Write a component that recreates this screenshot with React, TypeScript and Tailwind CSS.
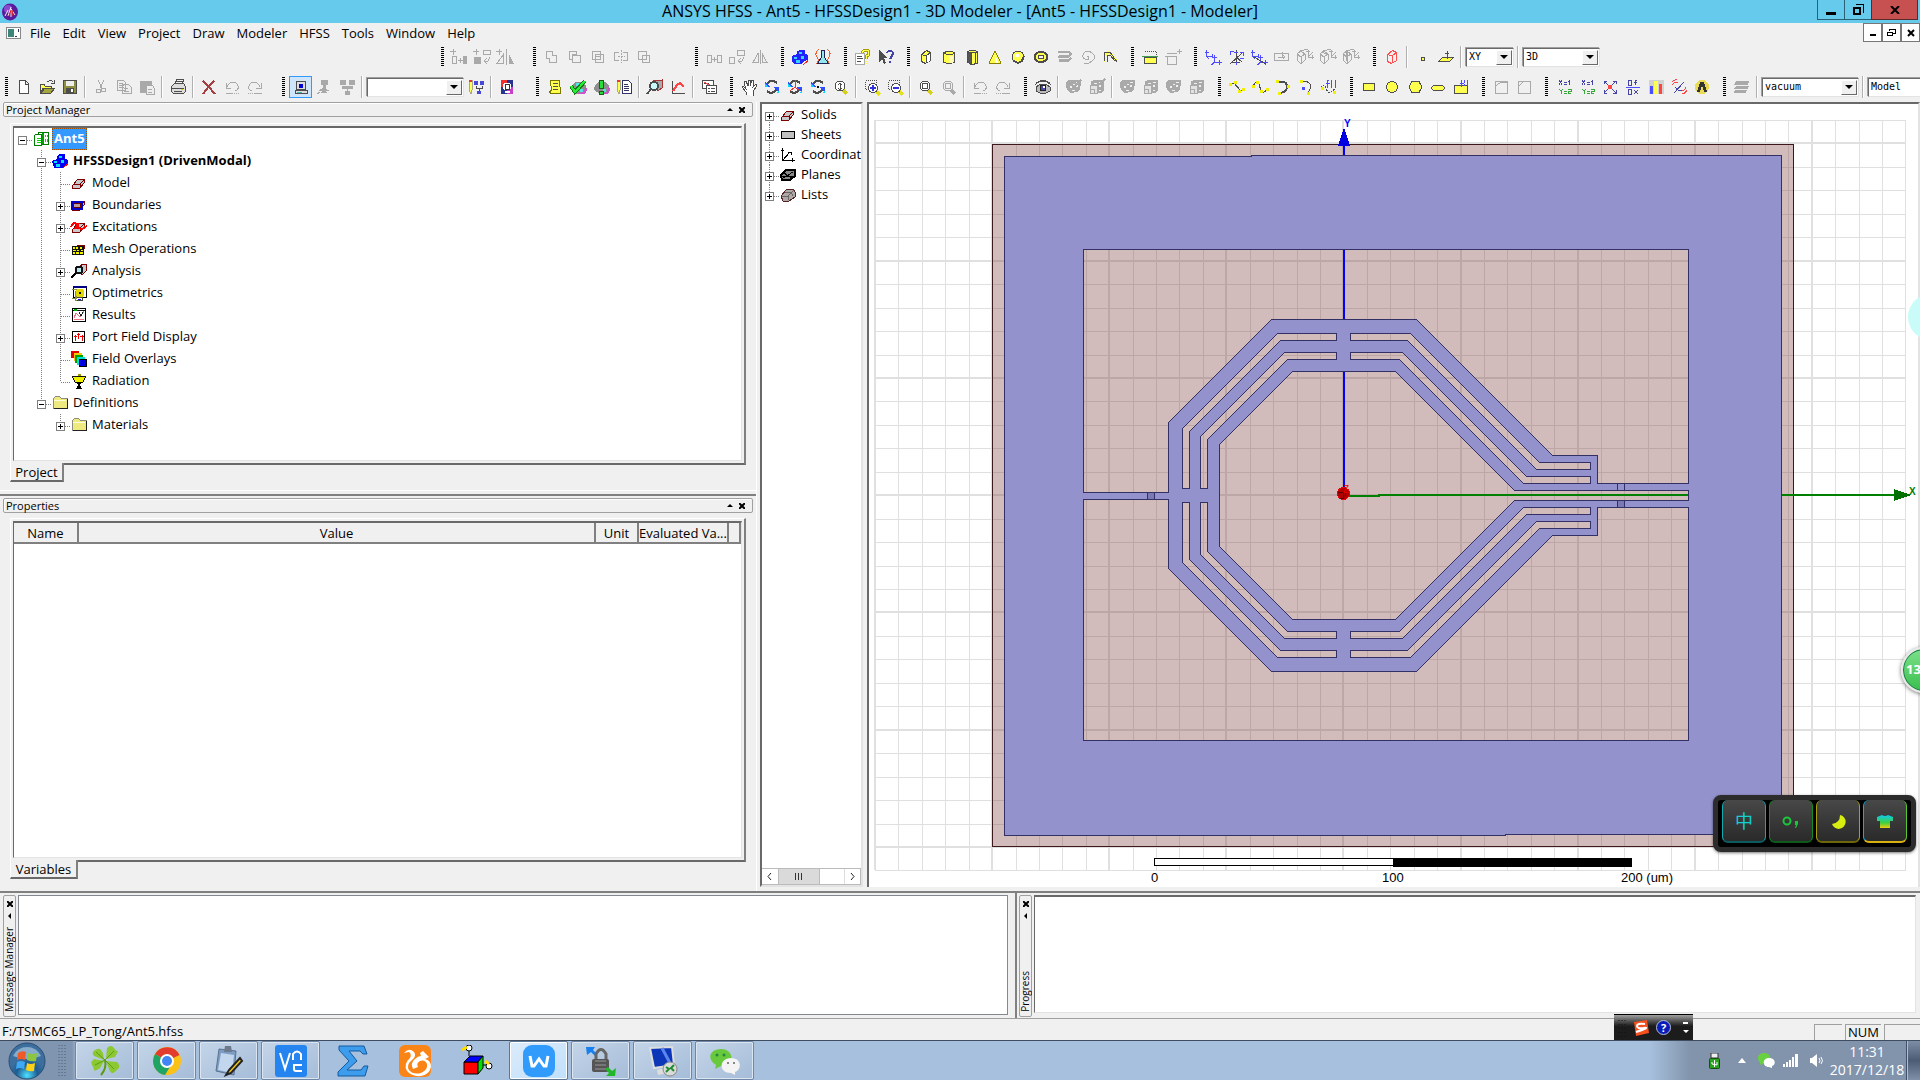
import React from 'react';
import type { ReactNode } from 'react';

const G = '#a9a9a9';
const D = '#4d4d4d';
const Y = '#ffff4d';
const B = '#4d4dff';

type Box = [number, number, number, number];

function Rects({ c, r }: { c: string; r: Box[] }) {
  return (
    <>
      {r.map(([x, y, w, h], i) => (
        <rect key={i} x={x} y={y} width={w} height={h} fill={c} />
      ))}
    </>
  );
}

const plus = <path d="M0 4.500h6M3.500 2v6" stroke={G} />;
const eye = (
  <>
    <path d="M2 5l3-2h12v3l-1 6-3 3-6 1-4-3-1-4z" fill={G} />
    <path d="M6 9h2v2H6zM12 8h2v2h-2zM9 7h2v1H9zM8 13h3v1H8zM12 5h3v1h-3z" fill="#f0f0f0" />
  </>
);
const eyeBox = (
  <>
    <path d="M4 4l3-1h10v10l-3 3-10 1z" fill={G} />
    <path d="M7 6h3v1H7zM12 8h2v2h-2zM12 5h3v1h-3zM12 13h2v1h-2z" fill="#f0f0f0" />
    <path d="M3.500 8.500h7v8h-7zM3.500 12.500h4v4" fill="#e2e2e2" stroke={G} />
  </>
);
const rotate = (
  <>
    <path d="M5 7q3-4 7-3l3 2M15 12q-3 4-7 4l-3-2" stroke={D} strokeWidth="2" />
    <path d="M3 4v6h5zM17 16v-6h-5z" fill="#2a4fff" />
    <path d="M17 13v3h-3zM3 7v3h3z" fill="#0df" />
  </>
);
const lens = (
  <>
    <path d="M12 13l4 4" stroke="#d6cf20" strokeWidth="3" />
    <circle cx="9" cy="9" r="5" fill="#fff" stroke={D} />
  </>
);
const zoomRect = (
  <>
    <path d="M3.500 3.500h11v9h-11z" stroke={D} strokeDasharray="1 1" />
    <path d="M14 14l4 4" stroke="#e6e020" strokeWidth="3" />
    <circle cx="11" cy="11" r="4.500" fill="#fff" stroke={D} />
  </>
);
const chip = (
  <>
    <path d="M8 5h6l4 4-2 7-7 1-6-4 1-5z" fill="#8f8f8f" />
    <path d="M8 6h3v3H8zM12 12h3v3h-3z" fill="#4fe3e3" />
    <path d="M8 17l8-2 2-6 1 4-2 4z" fill="#d24fd2" />
  </>
);
const axes = (
  <>
    <path d="M3.500 3v6h6M3.500 9l2 3" stroke={B} />
    <path d="M11.500 8v7h7M11.500 15l-3 3" stroke={B} />
    <path d="M2 5h4M9 7v4M10 10h4M16 13v5" stroke={B} />
  </>
);
const cubeAxes = (
  <>
    <path d="M2 7l4-3 4 3v6l-4 4-4-4zM2 7l4 3 4-3M6 10v7" stroke={G} />
    <path d="M13 10V3M13 10h6M13 10l5-5M11 4h4M17 8v4M5 4l8-2" stroke={G} />
  </>
);
const curvePts = (r: Box[]) => <Rects c="#f0f000" r={r} />;
const xy = (
  <>
    <path d="M5 3l3 5M8 3l-3 5M10 5h3M10 7h3M15 3v5M14 4h1" stroke="#4545a5" />
    <path d="M5 12l2 2 2-2M7 14v3M10 14h3M10 16h3M14 12.500h3v2h-3v2h3" stroke="#38a838" />
  </>
);

const icons: Record<string, ReactNode> = {
  'Duplicate along line': (<>{plus}<path d="M2.500 9.500h4v7h-4zM8 13.500h5M10 11v5" stroke={G} /><rect x="13" y="9" width="4" height="8" fill={G} /></>),
  'Duplicate around axis': (<>{plus}<rect x="1" y="10" width="7" height="7" fill={G} /><path d="M10.500 3.500h7v4h-7zM17 10l-2 4h-4M14 11l-3 3 3 3" stroke={G} /></>),
  'Duplicate mirror': (<>{plus}<path d="M1 16.500h6V8zM10.500 2v16" stroke={G} /><path d="M13 7v10h5z" fill={G} /></>),
  Unite: <path d="M4.500 4.500h6v4h4v7h-7v-4h-3z" stroke={G} />,
  Subtract: (<><path d="M4.500 4.500h7v3h-4v5h-3z" stroke={G} /><path d="M7.500 8.500h8v7h-8z" stroke={G} /></>),
  Intersect: (<><path d="M4.500 4.500h8v8h-8zM7.500 7.500h8v8h-8zM8 9.500h4v3" stroke={G} /></>),
  Split: (<><path d="M8 5.500H3.500v8H8M12 5.500h4.500v8H12" stroke={G} /><path d="M10.500 3v13M7 9.500h7" stroke={G} strokeDasharray="2 1" /></>),
  Imprint: (<><path d="M4.500 4.500h8v8h-8z" stroke={G} /><path d="M8.500 8.500h7v7h-7z" stroke={G} /></>),
  'Move': <path d="M3.500 8.500h4v7h-4zM13.500 8.500h4v7h-4zM8 12.500h5M10 10v5" stroke={G} />,
  'Rotate object': <path d="M2.500 10.500h5v6h-5zM10.500 3.500h7v5h-7zM17 10l-2 4h-4M14 11l-3 3 3 3" stroke={G} />,
  'Mirror': <path d="M3 15.500h5V6zM17 15.500h-5V6zM10.500 3v14" stroke={G} />,
  'Solve setup': (<><path d="M2 9l5-2V4l3-1h5v4l3 1v5l-4 1-2 3H4l-2-3z" fill="#2222ff" /><path d="M9 5h3v2H9zM4 10h3v2H4zM11 9h3v3h-3zM6 13h4v3H6z" fill="#35d5ff" /><path d="M9 18h3l6-6v3l-5 3z" fill="#f02020" /></>),
  Radiating: (<><path d="M9 3l2 0 1 8 3 5H5l3-5z" fill="#8fe8f0" stroke="#225" /><path d="M6 2Q1 6 4 10t-1 7M14 2q5 4 2 8t1 7" stroke="#f06030" /></>),
  'Topic help': (<><path d="M2.500 6.500h9v11h-9z" fill="#fff" stroke={G} /><path d="M4 9h5M4 11h6M4 14h4" stroke={D} /><path d="M9 6q1-3 4-3t3 3-3 3v3" stroke="#a89c00" strokeWidth="3" /><path d="M9 6q1-3 4-3t3 3-3 3v3M12 14h2v2h-2z" stroke={Y} /></>),
  'Context help': (<><path d="M3 3v12l3-3 2 5 2-1-2-5h4z" fill={D} /><path d="M11 6q1-3 4-2t1 5l-2 3M14 14v2" stroke="#4343a8" strokeWidth="2" /></>),
  Box: (<><path d="M5.500 7.500l5-4 4 2v8l-5 3-4-2z" fill={Y} stroke={D} /><path d="M10 9l4-2v7l-4 2z" fill="#fff" /><path d="M6 7.500l4 1.500v7M10 9l4-3" stroke={D} /></>),
  Cylinder: (<><path d="M4.500 6v9q6 3 11 0V6q-5-4-11 0z" fill={Y} stroke={D} /><path d="M10 9h4v7h-4z" fill="#fff8b8" /><path d="M5 6q5 4 11 0" stroke={D} /></>),
  'Regular polyhedron': (<><path d="M5.500 5l3-2h4l3 2v11l-3 1h-4l-3-2z" fill={Y} stroke={D} /><path d="M6 6h3v10H6z" fill="#555" /><path d="M5 5.500h11M9.500 6v11M13.500 6v10" stroke={D} /></>),
  Cone: (<><path d="M10 4L4 16q6 2 12 0z" fill={Y} stroke="#8a8000" /><path d="M10 6v10h3z" fill="#fff" /></>),
  Sphere: (<><circle cx="10" cy="10" r="6" fill={Y} stroke={D} /><path d="M6 14q7 5 10-5" stroke={D} strokeWidth="2" /><rect x="7" y="7" width="4" height="3" fill="#fff" /></>),
  Torus: (<><ellipse cx="10" cy="10" rx="6.500" ry="5" fill={Y} stroke={D} strokeWidth="2" /><ellipse cx="10" cy="10" rx="3" ry="1.500" fill="#f0f0f0" stroke={D} /></>),
  Helix: <path d="M4 5h11l2 2-2 2H5M5 13h10l2-2M4 10h11M5 14h10" stroke={G} strokeWidth="2" />,
  Spiral: <path d="M10 10q2-2 2 1t-4 1-1-6 8 0 0 8-8 2" stroke={G} />,
  Bondwire: (<><path d="M4 7l3-3 4 1 6 8v3l-5-7-4-2-2 2v8l-2-2z" fill={Y} /><path d="M4 14V5h6l7 10M7 15V8h3l5 6" stroke={D} /></>),
  'Section plane': (<><path d="M4.500 4.500h12v5" stroke={D} strokeDasharray="1 1" /><rect x="4.500" y="10.500" width="12" height="6" fill={Y} stroke={D} /><path d="M2 9.500h16" stroke="#39a050" /></>),
  'New plane': <path d="M3.500 6.500h10M2 9.500h12M4.500 9v8h9V9M14 4.500h5M16.500 2v5" stroke={G} />,
  'Relative CS': axes,
  'Offset CS': (<><path d="M10 3v14M4 17l12-11M10 10l6 5M6 15h8" stroke={D} /><path d="M8 5h4M4 8V4h4M14 5h3v4M10 15v3M14 11h4" stroke={B} /></>),
  'Rotated CS': (<>{axes}<path d="M5 10l12 7" stroke={D} /></>),
  'Face CS': <path d="M2.500 6.500h14v7h-14zM6 10h7M10 5v6M11 8l2 2-2 2" stroke={G} />,
  'Object CS': cubeAxes,
  'Edge CS': (<>{cubeAxes}<path d="M4 5l4 2" stroke={G} /></>),
  'Align CS': (<>{cubeAxes}<path d="M6 5v9" stroke={G} strokeWidth="2" /></>),
  'Wireframe box': <path d="M5.500 7.500l5-4 4 2v8l-5 3-4-2zM6 7.500l4 1.500v7M10 9l4-3" stroke="#ff4d4d" />,
  Point: <circle cx="10" cy="12" r="2" fill={Y} stroke={D} />,
  Plane: (<><path d="M3 14l4-4h11l-4 4z" fill={Y} stroke={D} /><path d="M11 12V4M9 6h4" stroke={D} /></>),
  New: <path d="M5.500 3.500h6l3 3v10h-9zM11 4v3h3" fill="#fff" stroke={D} />,
  Open: (<><path d="M3 7h4l1 2h6v2H6l-3 6z" fill={Y} stroke={D} /><path d="M3.500 16.500l4-5h10l-4 5z" fill="#a5a540" stroke={D} /><path d="M10 5q4-3 6 0M17 3v3h-3" stroke={D} /></>),
  Save: (<><path d="M3.500 3.500h13v13h-13z" fill="#8f8f40" stroke={D} /><path d="M6 4h8v5H6z" fill="#eee" /><path d="M6 11h8v5H6z" fill={D} /><path d="M11 12h2v3h-2z" fill="#fff" /></>),
  Cut: (<><path d="M7 3l4 8M13 3l-4 8" stroke={G} /><circle cx="7.500" cy="14" r="2" stroke={G} /><circle cx="12.500" cy="13" r="2" stroke={G} /></>),
  Copy: <path d="M3.500 3.500h6l2 2v8h-8zM5 6h4M5 8h5M5 10h5M8.500 7.500h6l3 3v6h-9zM10 11h4M10 14h5" fill="#eee" stroke={G} />,
  Paste: (<><path d="M3 4h12v12H3z" fill={G} /><path d="M9.500 8.500h6l2 3v6h-8zM11 12h4M11 15h4" fill="#eee" stroke={G} /></>),
  Print: (<><path d="M3.500 9.500l3-3h9l2 3v5l-2 2h-10l-2-2z" fill="#ddd" stroke={D} /><path d="M7 7l2-5h7l-2 5M9 4h5M4 11h12M6 14h8M5 16h10" stroke={D} /><rect x="13" y="12" width="2" height="1" fill="#d7d700" /></>),
  Delete: <path d="M4 4l5 5 7 8M15 4l-5 5-6 8" stroke="#a54040" strokeWidth="2" />,
  Undo: <path d="M4 6v5h5M5 10q2-5 6-5t5 4-3 5M4 16.500h7M12 16.500h1M14 16.500h1M16 16.500h1" stroke={G} />,
  Redo: <path d="M16 6v5h-5M15 10q-2-5-6-5t-5 4 3 5M3 16.500h1M5 16.500h1M7 16.500h1M9 16.500h8" stroke={G} />,
  'Local machine': (<><path d="M5.500 4.500h9v8h-9zM4 13.500h12v3H4z" fill="#ddd" stroke={D} /><rect x="8" y="7" width="4" height="4" fill="#0000d8" /><path d="M6 15h5" stroke="#4bb" /></>),
  'Remote machine': <path d="M7 3h6v4H7zM9 8h2v3H9zM5 14l5-3 5 3M7 16l3-2 3 2M3 17l3-2" fill={G} stroke={G} />,
  'Distributed machines': <path d="M3 3h5v4H3zM12 3h5v4h-5zM5 9v2h10V9M10 11v3M8 14h4v3H8z" fill={G} stroke={G} strokeWidth="1" />,
  'Edit distributed machines': (<><path d="M3 3h3v10l-1 4-2-4z" fill={Y} stroke="#aa8" /><path d="M3 3h3v2H3z" fill="#e33" /><path d="M8 4h4v4H8zM14 4h4v4h-4zM11 14h4v3h-4z" fill="#4747d8" /><path d="M10 9v2h6V9M13 11v3" stroke={D} /></>),
  Queue: (<><rect x="4" y="3" width="12" height="14" fill="#29348f" /><path d="M4 3h6v7H4z" fill="#f03030" /><path d="M10 10h6v7h-6z" fill="#c83ec8" /><circle cx="10" cy="9.500" r="4" fill="#fff" /><path d="M8 7h4v5H8z" stroke="#333" /><path d="M8 14h5v2H8z" fill="#fff" /></>),
  'Solution data': (<><path d="M5.500 3.500h9l1 13h-10l-1-2 2-1z" fill={Y} stroke="#777700" /><path d="M8 6h5M8 9h5M8 12h5" stroke={D} /></>),
  Validate: (<>{chip}<path d="M3 9l4 6 10-11" stroke="#117711" strokeWidth="4" /><path d="M3 9l4 6 10-11" stroke="#25f035" strokeWidth="2" /></>),
  'Analyze all': (<>{chip}<path d="M8 3h4v8H8zM8 14h4v3H8z" fill="#28dd38" stroke="#175d17" /></>),
  Notes: (<><path d="M3 3h3v10l-1 4-2-4z" fill={Y} stroke="#aa8" /><path d="M3 3h3v2H3z" fill="#e33" /><path d="M8.500 3.500h6l3 3v10h-9zM10 7h4M10 9h5M10 11h5M10 13h5" fill="#fff" stroke="#333366" /></>),
  'Solution lens': (<><path d="M8 4l9-1v8l-4 3z" fill="#aaa" stroke="#a33" /><circle cx="9" cy="9" r="4" fill="#c8f8f8" stroke={D} strokeWidth="2" /><path d="M6 12l-4 5" stroke={D} strokeWidth="2" /></>),
  'Create report': (<><path d="M4.500 4v12.500H17" stroke={D} /><path d="M5 14l4-6 3-2 4 4" stroke="#f44" strokeWidth="2" /></>),
  'Copy image': (<><path d="M3.500 3.500h11v8h-11zM5 6h4l4 4" fill="#fff" stroke={D} /><path d="M5 5l9 5" stroke="#f44" /><path d="M7.500 8.500h10v8h-10zM9 11h2M12 11h4M9 14h2M12 14h4" fill="#fff" stroke={D} /></>),
  Pan: <path d="M7 18v-3l-4-5 1-1 3 3-2-7 2-1 2 5V3h2v6l2-6 2 1-1 6 3-3 1 1-4 7v4" fill="#fff" stroke={D} />,
  Rotate: rotate,
  'Rotate axis': (<>{rotate}<path d="M10 3v7l5 4M10 10l-5 4" stroke="#e33" /></>),
  'Rotate screen': (<>{rotate}<rect x="9" y="9" width="2" height="2" fill="#111" /></>),
  Zoom: (<>{lens}<path d="M9 6v7M7 8l2-2 2 2M7 11l2 2 2-2" stroke={D} /></>),
  'Zoom in': (<>{zoomRect}<path d="M8 11h6M11 8v6" stroke="#3434dd" strokeWidth="2" /></>),
  'Zoom out': (<>{zoomRect}<path d="M8 11h6" stroke="#3434dd" strokeWidth="2" /></>),
  'Fit all': (<>{lens}<rect x="6.500" y="6.500" width="5" height="5" stroke={D} /></>),
  'Fit selection': (<><path d="M12 13l4 4" stroke={G} strokeWidth="3" /><circle cx="9" cy="9" r="5" stroke={G} /><path d="M6.500 6.500h5v5h-5z" stroke={G} /></>),
  Visibility: (<><path d="M2 8q8-8 16 0M3 6q7-5 14 0" stroke={D} /><path d="M3 10q7-6 14 0v4q-7 5-14 0z" fill="#bbb" stroke={D} /><circle cx="10" cy="11" r="3" fill="#4c4ca8" stroke="#222" /><rect x="10" y="9" width="2" height="2" fill="#fff" /></>),
  'Hide selection': (<>{eye}<path d="M11 9l6-6" stroke={G} strokeWidth="2" /></>),
  'Hide in view': (<>{eyeBox}<path d="M12 8l6-6" stroke={G} strokeWidth="2" /></>),
  'Show selection': eye,
  'Show in view': eyeBox,
  'Show all': eye,
  'Show all in view': eyeBox,
  Line: (<><path d="M3 7l4-1 6 7h4" stroke={D} />{curvePts([[2, 6, 3, 3], [7, 4, 3, 3], [11, 13, 3, 3], [15, 11, 3, 3]])}</>),
  Spline: (<><path d="M3 9q3-6 6-2l2 7q3 3 6-2" stroke={D} />{curvePts([[2, 8, 3, 3], [6, 4, 3, 3], [10, 13, 3, 3], [16, 11, 3, 3]])}</>),
  'Three point arc': (<><path d="M5 5q10-2 9 6-2 5-8 5" stroke={D} strokeWidth="2" />{curvePts([[3, 3, 3, 3], [14, 8, 3, 3], [5, 15, 3, 3]])}</>),
  'Center arc': (<><path d="M6 4q9 0 9 6-1 4-4 6" stroke={D} />{curvePts([[4, 3, 3, 3], [11, 15, 3, 3]])}<rect x="6" y="10" width="3" height="3" fill={B} /></>),
  'Equation curve': (<><path d="M2 11q3-6 5 0t5 4l4-3" stroke={D} strokeDasharray="2 1" /><path d="M10 3h-2v8M7 6h4M13 3q-2 4 0 8M16 3q2 4 0 8" stroke={B} />{curvePts([[2, 10, 3, 3], [14, 14, 3, 3]])}</>),
  Rectangle: <rect x="4.500" y="6.500" width="11" height="7" fill={Y} stroke={D} />,
  Circle: <circle cx="10" cy="10" r="5.500" fill={Y} stroke={D} />,
  Polygon: <path d="M7 4.500h7l3 5.500-3 5.500H7L4 10z" fill={Y} stroke={D} />,
  Ellipse: <ellipse cx="10" cy="11" rx="6.500" ry="3" fill={Y} stroke={D} />,
  'Equation surface': (<><path d="M3.500 8.500h13v8h-13z" fill={Y} stroke={D} /><path d="M11 3h-1v7M9 6h4M14 3q-2 4 0 6M16 3q2 4 0 6" stroke={B} /></>),
  Fillet: <path d="M4.500 4.500h12v12h-12zM5 9q3-4 11-4" stroke={G} />,
  Chamfer: <path d="M4.500 4.500h12v12h-12zM5 9l4-4" stroke={G} />,
  'Design properties': xy,
  'Project variables': xy,
  Optimetrics: (<><path d="M4 4l4 4M16 4l-4 4M4 16l4-4M16 16l-4-4M4 7V4h3M13 4h3v3M4 13v3h3M13 16h3v-3" stroke="#4545a5" /><rect x="8" y="8" width="4" height="4" fill="#f44" /></>),
  Sensitivity: (<><path d="M3 10h14" stroke={B} /><path d="M5 3h3v5H5zM14 3h-2v5M11 5h3M5 12h3v5H5zM11 13l4 4M15 13l-4 4" stroke="#4545a5" /></>),
  Statistics: (<><rect x="3" y="3" width="15" height="14" fill="#d2d2d2" /><Rects c={B} r={[[4, 9, 3, 8]]} /><Rects c={Y} r={[[8, 4, 4, 13]]} /><Rects c="#f44" r={[[13, 7, 3, 10]]} /></>),
  Tuning: (<><path d="M3 5q2-3 5-2M3 8q3-4 6-2M12 14q4 0 5-4M13 17q4-1 5-4" stroke="#f44" /><path d="M5 16L15 5M6 10l3 3 4 1" stroke="#4545a5" /></>),
  'Design of experiments': (<><circle cx="10" cy="10" r="7" fill="#eadb55" /><path d="M5 15l3-10h4l3 10h-3l-2-7-2 7z" fill="#333" /></>),
  'Assign material': <path d="M4 4h13l-1 4H2zM4 9h13l-1 3H2zM3 13h12l-1 3H2z" fill={G} />,
};

function Icon({ name }: { name: string }) {
  return (
    <svg width="20" height="20" viewBox="0 0 20 20" fill="none" shapeRendering="crispEdges" aria-hidden="true">
      {icons[name]}
    </svg>
  );
}

function Combo({ label, value, w }: { label: string; value: string; w: string }) {
  return (
    <span className={`${w} flex h-[19px] shrink-0 items-center border border-[#e3e3e3] border-t-[#696969] border-l-[#696969] bg-white p-px shadow-[-1px_-1px_0_#a0a0a0]`}>
      <select aria-label={label} className="h-full min-w-0 flex-1 appearance-none bg-white pl-px font-['DejaVu_Sans_Mono','Liberation_Mono',monospace] text-[10px] leading-none text-black outline-none">
        <option>{value}</option>
      </select>
      <span className="pointer-events-none flex h-full w-4 items-center justify-center border border-[#696969] border-t-white border-l-white bg-[#f0f0f0]">
        <svg width="8" height="4" aria-hidden="true"><path d="M0 0h8L4 4z" /></svg>
      </span>
    </span>
  );
}

const selects: Record<string, { value: string; w: string }> = {
  '#Active machine': { value: '', w: 'w-[97px]' },
  '#Drawing plane': { value: 'XY', w: 'w-[48px]' },
  '#Movement mode': { value: '3D', w: 'w-[77px]' },
  '#Material': { value: 'vacuum', w: 'w-[97px]' },
  '#Model state': { value: 'Model', w: 'w-[100px]' },
};

type Group = [string, string[]];

const row1: Group[] = [
  ['ml-[436px]', ['Duplicate along line', 'Duplicate around axis', 'Duplicate mirror']],
  ['ml-[11px]', ['Unite', 'Subtract', 'Intersect', 'Split', 'Imprint']],
  ['ml-[35px]', ['Move', 'Rotate object', 'Mirror']],
  ['ml-[5px]', ['Solve setup', 'Radiating']],
  ['ml-[5px]', ['Topic help', 'Context help']],
  ['ml-[5px]', ['Box', 'Cylinder', 'Regular polyhedron', 'Cone', 'Sphere', 'Torus', 'Helix', 'Spiral', 'Bondwire']],
  ['ml-[5px]', ['Section plane', 'New plane']],
  ['ml-[5px]', ['Relative CS', 'Offset CS', 'Rotated CS', 'Face CS', 'Object CS', 'Edge CS', 'Align CS']],
  ['ml-[6px]', ['Wireframe box', '|', 'Point', 'Plane', '|', '#Drawing plane', '|', '#Movement mode']],
];

const row2: Group[] = [
  ['ml-0', ['New', 'Open', 'Save', '|', 'Cut', 'Copy', 'Paste', '|', 'Print', '|', 'Delete', 'Undo', 'Redo']],
  ['ml-[11px]', ['Local machine', 'Remote machine', 'Distributed machines', '|', '#Active machine', 'Edit distributed machines', '|', 'Queue']],
  ['ml-[13px]', ['Solution data', 'Validate', 'Analyze all', 'Notes', '|', 'Solution lens', 'Create report', '|', 'Copy image']],
  ['ml-[5px]', ['Pan', 'Rotate', 'Rotate axis', 'Rotate screen', 'Zoom', '|', 'Zoom in', 'Zoom out', '|', 'Fit all', 'Fit selection', '|', 'Undo', 'Redo']],
  ['ml-[5px]', ['Visibility', '|', 'Hide selection', 'Hide in view', '|', 'Show selection', 'Show in view', 'Show all', 'Show all in view']],
  ['ml-[5px]', ['Line', 'Spline', 'Three point arc', 'Center arc', 'Equation curve']],
  ['ml-[5px]', ['Rectangle', 'Circle', 'Polygon', 'Ellipse', 'Equation surface']],
  ['ml-[5px]', ['Fillet', 'Chamfer']],
  ['ml-[5px]', ['Design properties', 'Project variables', 'Optimetrics', 'Sensitivity', 'Statistics', 'Tuning', 'Design of experiments']],
  ['ml-[5px]', ['Assign material', '|', '#Material', '|', '#Model state']],
];

function ToolRow({ groups, label }: { groups: Group[]; label: string }) {
  return (
    <div role="toolbar" aria-label={label} className="flex h-[30px] shrink-0 items-center overflow-hidden">
      {groups.map(([ml, items], gi) => (
        <div key={gi} className={`${ml} flex h-full shrink-0 items-center`}>
          <span className="flex w-3 justify-center">
            <svg width="3" height="20" aria-hidden="true"><path d="M1.500 0v20" stroke="#000" strokeWidth="3" strokeDasharray="1 1" shapeRendering="crispEdges" /></svg>
          </span>
          {items.map((n, i) => {
            if (n === '|') return <span key={i} className="mx-[3px] h-[22px] w-0.5 shrink-0 border-r border-l border-[#b0b0b0] border-r-white" />;
            if (n[0] === '#') return <span key={i} className="flex pl-px"><Combo label={n.slice(1)} value={selects[n].value} w={selects[n].w} /></span>;
            return (
              <button
                key={i}
                type="button"
                aria-label={n}
                className={`flex h-[22px] w-[23px] shrink-0 items-center justify-center ${n === 'Local machine' ? 'bg-[#cfe6fa] outline -outline-offset-1 outline-[#3399ff]' : ''}`}
              >
                <Icon name={n} />
              </button>
            );
          })}
        </div>
      ))}
    </div>
  );
}

/* ---------- trees ---------- */

const block = (
  <>
    <path d="M1.500 10.500l5-6h7v3l-5 6h-7z" fill="#c8c8c8" stroke="#800000" />
    <path d="M2 9.500h7v3M9 9l5-5" stroke="#800000" />
  </>
);

const treeIcons: Record<string, ReactNode> = {
  Ant5: (<><path d="M5.500 1.500h10v12h-10z" fill="#fff" stroke="#007d00" /><path d="M10 2v11" stroke="#00a000" strokeWidth="2" /><Rects c="#00d800" r={[[12, 4, 1, 2], [14, 4, 1, 2], [12, 8, 1, 3], [14, 8, 1, 3]]} /><path d="M2.500 3.500h6v11h-7v-10z" fill="#fff" stroke="#007d00" /><path d="M4 7h4M4 9h4M4 11h4" stroke="#00d800" /></>),
  HFSSDesign1: (<><path d="M0 8l5-2V3l3-2h5v5l3 1v5l-4 1-2 2H2z" fill="#0000f0" /><path d="M7 3h3v2H7zM2 8h3v2H2zM9 7h3v3H9zM4 11h4v3H4z" fill="#00e0ff" /><path d="M7 15h3l6-6v3l-5 3z" fill="#f00" /></>),
  Model: block,
  Boundaries: (<>{block}<rect x="1" y="5" width="10" height="7" fill="#b9a0a0" stroke="#0000c8" strokeWidth="2" /><rect x="2.500" y="6.500" width="7" height="4" stroke="#600" /></>),
  Excitations: (<>{block}<path d="M0 8q3-7 6-2t5 4 5-3M4 10l4-6" stroke="#f00" strokeWidth="2" /></>),
  'Mesh Operations': (<>{block}<path d="M1 5h12v9H1z" fill="#111" /><Rects c="#f5f500" r={[[2, 6, 2, 2], [5, 6, 2, 2], [9, 6, 2, 2], [2, 9, 3, 1], [6, 9, 2, 1], [10, 9, 2, 1], [2, 11, 2, 2], [5, 11, 3, 2], [9, 11, 3, 2]]} /></>),
  Analysis: (<><path d="M9 4l2-3h4v7l-4 4z" fill="#c8c8c8" stroke="#800000" /><circle cx="8" cy="7" r="3.500" fill="#b8e8f0" stroke="#111" strokeWidth="2" /><path d="M5 10l-5 5" stroke="#000" strokeWidth="2" /></>),
  Optimetrics: (<><path d="M2.500 1.500h13v11h-13z" fill="#fff" stroke="#000" /><path d="M2 1.500h14" stroke="#000080" strokeWidth="2" /><path d="M.500 4.500h5v9h-5M4 6v9h5" stroke="#8b8b40" /><circle cx="9" cy="8" r="3" fill="#fff" stroke="#e0d800" strokeWidth="3" /><circle cx="9" cy="8" r="1.500" fill="#111" /><path d="M5.500 12.500h6v3h-6" fill="#fff" stroke="#444" /><path d="M7 14h3" stroke="#00f" /></>),
  Results: (<><rect x="1.500" y="1.500" width="13" height="13" fill="#fff" stroke="#000" /><path d="M2 3h12" stroke="#111" /><path d="M3 3h3" stroke="#0a0" strokeWidth="2" /><path d="M3 11l2-5 4 4 4-6M3 12h10" stroke="#f07080" /><path d="M8 5l2 4 2-4" stroke="#222" /></>),
  'Port Field Display': (<><rect x="1.500" y="2.500" width="12" height="11" fill="#fff" stroke="#000" /><path d="M4.500 12V6M7.500 10V4M11 12V6M3 7.500h3M6 5.500h3M9 7.500h4" stroke="#e00" /></>),
  'Field Overlays': (<><Rects c="#e00000" r={[[0, 0, 8, 7]]} /><Rects c="#f5c800" r={[[3, 2, 8, 8]]} /><Rects c="#00a000" r={[[4, 4, 8, 8]]} /><Rects c="#00e0e0" r={[[6, 6, 8, 8]]} /><rect x="8.500" y="8.500" width="7" height="7" fill="#0000e0" stroke="#000" /></>),
  Radiation: (<><path d="M1 3h14l-3 6H4z" fill="#f0f000" stroke="#111" /><path d="M7 1h3v2H7z" fill="#990" /><path d="M5 9h6l-2 3 2 4H5l2-4z" fill="#000" /></>),
  Folder: (<><path d="M1.500 3.500l2-2h4l2 2h6v10h-14z" fill="#eeea80" stroke="#8b8b80" /><path d="M2 13.500h14M15.500 4v10" stroke="#222" /><path d="M2 5.500h12" stroke="#fffde0" /></>),
  Solids: block,
  Sheets: <rect x="1.500" y="4.500" width="13" height="7" fill="#c0c0c0" stroke="#000" />,
  Coordinate: (<><path d="M2.500 1v12.500H15M3 13l7-8M1 3h3M12 11v4M8 5h3v3" stroke="#000" /></>),
  Planes: (<><path d="M1 8l5-5h9v6l-5 4H2z" fill="#888" stroke="#000" strokeWidth="2" /><path d="M0 9h16M4 6l8 5M3 11L13 5" stroke="#000" /></>),
  Lists: (<><path d="M1 9l6-7h6l2 3v5l-6 4H3z" fill="#b0a8a8" stroke="#552222" /><path d="M2 9h6l6-6M8 9v4M5 5h6l2 4" stroke="#666" /></>),
};

type Cell = 'blank' | 'bar' | 'tee' | 'end' | 'plus' | 'plusEnd' | 'plusTop' | 'minus' | 'minusEnd' | 'root';

function Lines({ kind, h }: { kind: Cell; h: number }) {
  const c = h / 2 + 1;
  const box = ['plus', 'plusEnd', 'plusTop', 'minus', 'minusEnd', 'root'].includes(kind);
  const up = !['blank', 'root', 'plusTop'].includes(kind);
  const down = ['bar', 'tee', 'plus', 'plusTop', 'minus'].includes(kind);
  return (
    <svg width="19" height={h} className="shrink-0" fill="none" shapeRendering="crispEdges" aria-hidden="true">
      {up && <path d={`M9.500 0V${c}`} stroke="#808080" strokeDasharray="1 1" />}
      {down && <path d={`M9.500 ${c}V${h}`} stroke="#808080" strokeDasharray="1 1" />}
      {kind !== 'bar' && kind !== 'blank' && <path d={`M10 ${c}.5H19`} stroke="#808080" strokeDasharray="1 1" />}
      {box && (
        <>
          <rect x="5.500" y={c - 3.5} width="8" height="8" fill="#fff" stroke="#808080" />
          <path d={`M7 ${c}.5h5`} stroke="#000" />
          {kind.startsWith('plus') && <path d={`M9.500 ${c - 2}v5`} stroke="#000" />}
        </>
      )}
    </svg>
  );
}

type Node = { label: string; icon: string; cells: Cell[]; bold?: boolean; selected?: boolean };

const projectTree: Node[] = [
  { label: 'Ant5', icon: 'Ant5', cells: ['root'], bold: true, selected: true },
  { label: 'HFSSDesign1 (DrivenModal)', icon: 'HFSSDesign1', cells: ['blank', 'minus'], bold: true },
  { label: 'Model', icon: 'Model', cells: ['blank', 'bar', 'tee'] },
  { label: 'Boundaries', icon: 'Boundaries', cells: ['blank', 'bar', 'plus'] },
  { label: 'Excitations', icon: 'Excitations', cells: ['blank', 'bar', 'plus'] },
  { label: 'Mesh Operations', icon: 'Mesh Operations', cells: ['blank', 'bar', 'tee'] },
  { label: 'Analysis', icon: 'Analysis', cells: ['blank', 'bar', 'plus'] },
  { label: 'Optimetrics', icon: 'Optimetrics', cells: ['blank', 'bar', 'tee'] },
  { label: 'Results', icon: 'Results', cells: ['blank', 'bar', 'tee'] },
  { label: 'Port Field Display', icon: 'Port Field Display', cells: ['blank', 'bar', 'plus'] },
  { label: 'Field Overlays', icon: 'Field Overlays', cells: ['blank', 'bar', 'tee'] },
  { label: 'Radiation', icon: 'Radiation', cells: ['blank', 'bar', 'end'] },
  { label: 'Definitions', icon: 'Folder', cells: ['blank', 'minusEnd'] },
  { label: 'Materials', icon: 'Folder', cells: ['blank', 'blank', 'plusEnd'] },
];

const modelTree: Node[] = [
  { label: 'Solids', icon: 'Solids', cells: ['plusTop'] },
  { label: 'Sheets', icon: 'Sheets', cells: ['plus'] },
  { label: 'Coordinate Systems', icon: 'Coordinate', cells: ['plus'] },
  { label: 'Planes', icon: 'Planes', cells: ['plus'] },
  { label: 'Lists', icon: 'Lists', cells: ['plusEnd'] },
];

function Tree({ nodes, h, rowClass, className, label }: { nodes: Node[]; h: number; rowClass: string; className: string; label: string }) {
  return (
    <ul aria-label={label} className={className}>
      {nodes.map((n) => (
        <li key={n.label} className={`flex items-center whitespace-nowrap ${rowClass}`}>
          {n.cells.map((c, i) => <Lines key={i} kind={c} h={h} />)}
          <svg width="18" height="16" viewBox="-1 0 18 16" className="shrink-0" fill="none" shapeRendering="crispEdges" aria-hidden="true">{treeIcons[n.icon]}</svg>
          <span className={`ml-0.5 px-0.5 text-[13px] ${n.bold ? 'font-bold' : ''} ${n.selected ? 'flex h-full items-center bg-[#3399ff] text-white outline-1 -outline-offset-1 outline-dotted outline-[#a05000]' : ''}`}>{n.label}</span>
        </li>
      ))}
    </ul>
  );
}

/* ---------- 3D modeler viewport ---------- */

type P = [number, number];
const flip = (p: P[]): P[] => p.map(([x, y]) => [x, 991 - y]);
const poly = (p: P[]) => 'M' + p.map((q) => q.join(' ')).join('L') + 'Z';

const upperCavity: P[] = [[1083.5, 249.5], [1688.5, 249.5], [1688.5, 483.5], [1597.5, 483.5], [1597.5, 455.5], [1552.5, 455.5], [1416.5, 319.5], [1271.5, 319.5], [1168.5, 422.5], [1168.5, 492.5], [1083.5, 492.5]];
const lowerCavity: P[] = [[1083.5, 740.5], [1688.5, 740.5], ...flip(upperCavity.slice(2, 9)), [1168.5, 499.5], [1083.5, 499.5]];
const core: P[] = [[1219.5, 444.5], [1292.5, 371.5], [1395.5, 371.5], [1514.5, 490.5], [1688.5, 490.5], [1688.5, 500.5], [1514.5, 500.5], [1395.5, 619.5], [1292.5, 619.5], [1219.5, 546.5]];
const slits: P[][] = [
  [[1182.5, 488.5], [1182.5, 428.5], [1277.5, 333.5], [1336.5, 333.5], [1336.5, 340.5], [1280.5, 340.5], [1189.5, 431.5], [1189.5, 488.5]],
  [[1200.5, 488.5], [1200.5, 436.5], [1284.5, 352.5], [1336.5, 352.5], [1336.5, 359.5], [1287.5, 359.5], [1207.5, 439.5], [1207.5, 488.5]],
  [[1350.5, 333.5], [1410.5, 333.5], [1539.5, 462.5], [1590.5, 462.5], [1590.5, 469.5], [1536.5, 469.5], [1407.5, 340.5], [1350.5, 340.5]],
  [[1350.5, 352.5], [1402.5, 352.5], [1526.5, 476.5], [1590.5, 476.5], [1590.5, 483.5], [1523.5, 483.5], [1399.5, 359.5], [1350.5, 359.5]],
];
const metal =
  'M1004.5 156.500H1251.500V155.500H1781.500V834.500H1505.500V835.500H1004.500Z' +
  poly(upperCavity) + poly(lowerCavity) + poly(core) +
  slits.map((s) => poly(s) + poly(flip(s))).join('');

const gx = Array.from({ length: 45 }, (_, i) => 875 + Math.round(i * 23.42));
const gy = Array.from({ length: 33 }, (_, i) => 120 + Math.round(i * 23.45));

function Viewport() {
  return (
    <svg width="100%" height="100%" className="block" fill="none" shapeRendering="crispEdges" role="img" aria-label="Ant5 model view">
      <g transform="translate(-869 -104)">
        {gx.map((x, i) => <rect key={x} x={i % 5 ? x : x - 1} y="120" width={i % 5 ? 1 : 2} height="750" fill="#e0e0e0" />)}
        {gy.map((y, i) => <rect key={y} x="875" y={i % 5 === 1 ? y - 1 : y} width="1031" height={i % 5 === 1 ? 2 : 1} fill="#e0e0e0" />)}
        <rect x="992.500" y="144.500" width="801" height="702" fill="#722e2a" fillOpacity=".32" stroke="#3c1a1c" />
        <path d="M1344 140V488" stroke="#0000ff" strokeWidth="2" />
        <path d="M1349 496H1379V495H1688M1780 495H1895" stroke="#008000" strokeWidth="2" />
        <path d={metal} fillRule="evenodd" fill="#9492cd" stroke="#333066" />
        <path d="M1147.500 492.500h7v7h-7zM1617.500 500.500h7v7h-7z" fill="#7a78b5" stroke="#333066" />
        <path d="M1617.500 483.500h7v7h-7z" stroke="#333066" />
        <path d="M1344 127l6 19h-12z" fill="#0000e0" />
        <path d="M1894 489l17 6-17 6z" fill="#007000" />
        <circle cx="1343.500" cy="493.500" r="6" fill="#b00000" stroke="#f00000" />
        <path d="M1338 492h5v6h-3M1345 490v6" stroke="#600000" />
        <g className="font-['Liberation_Sans',Arial,sans-serif]">
          <text x="1344" y="127" fontSize="10" fontWeight="bold" fill="#0000ff">Y</text>
          <text x="1909" y="495" fontSize="10" fontWeight="bold" fill="#008000">X</text>
          <text x="1343" y="493" fontSize="10" fill="#f00000">Z</text>
          <text x="1151" y="882" fontSize="13" fill="#000">0</text>
          <text x="1382" y="882" fontSize="13" fill="#000">100</text>
          <text x="1621" y="882" fontSize="13" fill="#000">200 (um)</text>
        </g>
        <rect x="1154.500" y="858.500" width="239" height="7" fill="#fff" stroke="#000" />
        <rect x="1393" y="858" width="239" height="9" fill="#000" />
      </g>
    </svg>
  );
}

/* ---------- docked panels ---------- */

function Caption({ title }: { title: string }) {
  return (
    <div className="mx-[3px] flex h-[15px] shrink-0 items-center rounded-xs border border-[#a0a0a0] pr-1 pl-0.5 shadow-[inset_1px_1px_0_#fff]">
      <h2 className="flex-1 text-[11px] leading-none">{title}</h2>
      <button type="button" aria-label={`Collapse ${title}`} className="flex h-3 w-3 items-center justify-center"><svg width="6" height="3" aria-hidden="true"><path d="M0 3h6L3 0z" /></svg></button>
      <button type="button" aria-label={`Close ${title}`} className="flex h-3 w-3 items-center justify-center"><svg width="6" height="6" aria-hidden="true"><path d="M0 0l6 6M6 0L0 6" stroke="#000" strokeWidth="2" /></svg></button>
    </div>
  );
}

function SideCaption({ title }: { title: string }) {
  return (
    <div className="flex w-[13px] shrink-0 flex-col items-center rounded-xs border border-[#a0a0a0] pt-0.5">
      <button type="button" aria-label={`Close ${title}`} className="flex h-3 w-3 items-center justify-center"><svg width="6" height="6" aria-hidden="true"><path d="M0 0l6 6M6 0L0 6" stroke="#000" strokeWidth="2" /></svg></button>
      <button type="button" aria-label={`Collapse ${title}`} className="flex h-3 w-3 items-center justify-center"><svg width="3" height="6" aria-hidden="true"><path d="M3 0v6L0 3z" /></svg></button>
      <h2 className="mt-auto mb-1 rotate-180 text-[10px] leading-[11px] whitespace-nowrap [writing-mode:vertical-rl]">{title}</h2>
    </div>
  );
}

function TabPanel({ tab, tabWidth, children }: { tab: string; tabWidth: string; children: ReactNode }) {
  return (
    <div className="mr-[10px] ml-[10px] flex min-h-0 flex-1 flex-col">
      <div className="flex min-h-0 flex-1 flex-col border-t border-r-2 border-b-2 border-l border-white border-r-[#808080] border-b-[#696969] p-0.5">
        <div className="min-h-0 flex-1 overflow-hidden border border-t-2 border-[#e3e3e3] border-t-[#696969] border-l-[#696969] bg-white">{children}</div>
      </div>
      <div role="tablist" className="-mt-0.5 flex">
        <button type="button" role="tab" aria-selected="true" className={`${tabWidth} h-[19px] border-r-2 border-b-2 border-l border-r-[#808080] border-b-[#696969] border-l-white bg-[#f0f0f0] text-center text-[13px] leading-4`}>{tab}</button>
      </div>
    </div>
  );
}

const columns = [
  { name: 'Name', w: 'w-[64px]' },
  { name: 'Value', w: 'w-auto' },
  { name: 'Unit', w: 'w-[43px]' },
  { name: 'Evaluated Va...', w: 'w-[90px]' },
  { name: '', w: 'w-[12px]' },
];

const menus = ['File', 'Edit', 'View', 'Project', 'Draw', 'Modeler', 'HFSS', 'Tools', 'Window', 'Help'];

/* ---------- task bar ---------- */

const apps: { name: string; frame: string; art: ReactNode }[] = [
  { name: 'Clover', frame: 'on', art: <><path d="M16 15q2 8-4 15" stroke="#5a9a10" strokeWidth="2" /><g fill="#8cc832"><path d="M15 15L5 11Q2 7 6 5t5-1 3 4z" /><path d="M17 14l1-11q4-4 7 0t4 3-3 6z" /><path d="M15 16L5 14q-4 3-2 6t2 5 6-2z" /><path d="M17 16l11 1q4 4 1 7t-5 4-4-4z" /></g><path d="M16 15L7 7M16 15l9-9M16 15l-10 5M16 15l9 9" stroke="#5f9d14" /></> },
  { name: 'Chrome', frame: 'on', art: <><circle cx="16" cy="16" r="14" fill="#fbc116" /><path d="M16 16L4 9a14 14 0 0 1 24.500 1z" fill="#e33b2e" /><path d="M16 16L4 9a14 14 0 0 0 10 21l6-10z" fill="#1fa463" /><circle cx="16" cy="16" r="7" fill="#fff" /><circle cx="16" cy="16" r="5" fill="#4285f4" /></> },
  { name: 'Notepad', frame: 'on', art: <><path d="M6 4l17 2-2 24-18-4z" fill="#7d9cc4" stroke="#5a7290" /><path d="M8 8l13 2-2 18-14-3z" fill="#c2d6ee" /><path d="M12 1h6l1 6h-8z" fill="#6d7a8c" /><path d="M27 13L16 25l-3 5 5-2 11-12z" fill="#f8c818" stroke="#222" strokeWidth="2" /></> },
  { name: 'VNC', frame: 'on', art: <><rect width="32" height="32" rx="3" fill="#2484f0" /><path d="M5 8l5 16 5-16M18 15V9q4-5 8 0v6M27 20h-8v4q0 2 2 2h6" stroke="#fff" strokeWidth="2" /></> },
  { name: 'Sigma', frame: '', art: <path d="M2 1h25l3 8h-4l-3-3H12l8 10-10 9h14l3-4h4l-3 10H1v-4l11-11L2 5z" fill="#3d9cec" stroke="#135a9e" /> },
  { name: 'UC Browser', frame: '', art: <><rect width="32" height="32" rx="6" fill="#fa8516" /><path d="M5 8q5-6 10-1 3 4-2 8-6 5-3 10 4 5 12 3 7-3 6-9-2-5-7-3-4 2-2 6l-5 2q-3-6 2-10 3-3 6-3l-1-3 3-2 3 3 3 3-4 2q6 1 6 8-2 8-10 9-9 1-14-5-4-7 3-13 2-4-1-6z" fill="#fff" /></> },
  { name: 'HFSS', frame: '', art: <><path d="M3 17h14v12H3z" fill="#f00" stroke="#000" /><path d="M3 17l6-6h13l-5 6z" fill="#00f" stroke="#000" /><path d="M17 17l5-6v12l-5 6z" fill="#0d0" stroke="#000" /><path d="M8 11V5M22 20h4" stroke="#000" /><circle cx="8" cy="3" r="3" fill="#fff" stroke="#000" /><circle cx="28" cy="21" r="3" fill="#fff" stroke="#000" /><path d="M1 5l5-3M24 16l4 3" stroke="#fd0" strokeWidth="3" /></> },
  { name: 'WPS Writer', frame: 'active', art: <><rect width="32" height="32" rx="9" fill="#319bfb" /><path d="M7 11l2 10h2l5-7 5 7h2l2-10" stroke="#fff" strokeWidth="3" /></> },
  { name: 'Secure transfer', frame: 'on', art: <><path d="M1 2h9L8 5l4 4-2 2-4-4-4 3z" fill="#1680f0" /><path d="M11 15V9q5-9 10 0v6" stroke="#666" strokeWidth="3" /><rect x="7" y="14" width="17" height="13" rx="2" fill="#555" /><path d="M10 16h11M10 20h11M10 24h11" stroke="#999" /><path d="M30 31h-9l3-3-4-4 3-2 4 4 4-3z" fill="#20b828" /></> },
  { name: 'Remote desktop', frame: 'on', art: <><path d="M3 3l22-1 2 18-20 3z" fill="#0d35b8" stroke="#ddd" strokeWidth="2" /><path d="M15 3l9 17" stroke="#5c86ef" strokeWidth="3" /><path d="M10 25l12-3 2 5-13 3z" fill="#ddd" /><circle cx="23" cy="24" r="7" fill="#d8dcd8" stroke="#888" /><path d="M19 22l3 2-3 3M27 20l-3 3 3 3" stroke="#208a30" strokeWidth="2" /></> },
  { name: 'WeChat', frame: 'on', art: <><path d="M12 4c14 0 14 18 0 17l-6 3 1-4C-3 14 1 4 12 4z" fill="#69c93c" /><path d="M22 13c11 0 11 12 4 14v3l-4-2c-13 0-12-15 0-15z" fill="#f4f4f4" /><circle cx="8" cy="10" r="1.500" fill="#284" /><circle cx="15" cy="10" r="1.500" fill="#284" /><circle cx="19" cy="18" r="1" fill="#666" /><circle cx="25" cy="18" r="1" fill="#666" /></> },
];

const imeKeys = [
  { name: 'Chinese mode', key: 'border-x-[#12a8b0] border-b-[#0d5a60]', art: <text x="12" y="19" fontSize="18" textAnchor="middle" fill="#12cfd4" className="font-['Noto_Sans_CJK_SC',sans-serif]">中</text> },
  { name: 'Punctuation', key: 'border-x-[#118a28] border-b-[#0d5a1c]', art: <><circle cx="8" cy="12" r="3.500" stroke="#1cc43c" strokeWidth="2" /><path d="M16 12h3v3l-2 4h-1l1-3h-1z" fill="#1cc43c" /></> },
  { name: 'Half width', key: 'border-x-[#a8a010] border-b-[#6c6808]', art: <path d="M14 6a7 7 0 1 1-8 9q8-1 8-9z" fill="#d8ee10" /> },
  { name: 'Skins', key: 'border-[#d8b010] border-l-[#12a8e0] border-r-[#58c830]', art: <><defs><linearGradient id="skin" x2="0" y2="1"><stop offset="0" stopColor="#0cc8f0" /><stop offset=".6" stopColor="#40d040" /><stop offset="1" stopColor="#f0d010" /></linearGradient></defs><path d="M4 8l5-2q3 2 6 0l5 2v4h-3v7H7v-7H4z" fill="url(#skin)" /></> },
];

export default function App() {
  return (
    <div className="relative flex h-screen min-h-[640px] flex-col overflow-hidden bg-[#f0f0f0] font-['Open_Sans','Noto_Sans',sans-serif] text-black">
      <header className="flex h-[23px] shrink-0 items-start bg-[#66caec]">
        <div className="flex h-full flex-1 items-center pl-0.5">
          <svg width="16" height="18" viewBox="0 0 16 18" fill="none" aria-hidden="true">
            <ellipse cx="8" cy="9" rx="8" ry="8.500" fill="#5a1a9c" /><ellipse cx="6" cy="6" rx="4" ry="4" fill="#8a4ad0" />
            <path d="M3 13l3-6M6 13l3-9M9 14V6l4 6" stroke="#f4e8f0" strokeWidth="1" /><path d="M7 13l2-6M11 13l-1-6" stroke="#e02020" />
          </svg>
        </div>
        <h1 className="pt-[3px] text-base leading-4">ANSYS HFSS - Ant5 - HFSSDesign1 - 3D Modeler - [Ant5 - HFSSDesign1 - Modeler]</h1>
        <div className="flex flex-1 justify-end pr-0.5">
          <button type="button" aria-label="Minimize" className="flex h-5 w-7 items-center justify-center border border-t-0 border-[#2b5f73]"><svg width="10" height="10" aria-hidden="true"><path d="M0 7h10v3H0z" /></svg></button>
          <button type="button" aria-label="Restore" className="flex h-5 w-[26px] items-center justify-center border-b border-[#2b5f73]"><svg width="11" height="11" fill="none" aria-hidden="true" shapeRendering="crispEdges"><path d="M1 4h6v6H1z" stroke="#000" strokeWidth="2" /><path d="M3 .5h7.500v8" stroke="#000" /></svg></button>
          <button type="button" aria-label="Close" className="flex h-5 w-[47px] items-center justify-center border border-t-0 border-[#5a2a28] bg-[#c75050]"><svg width="10" height="8" aria-hidden="true"><path d="M1 0l8 8M9 0L1 8" stroke="#000" strokeWidth="2" /></svg></button>
        </div>
      </header>

      <nav aria-label="Main menu" className="flex h-[19px] shrink-0 items-center">
        <svg width="16" height="14" viewBox="0 0 16 14" className="ml-1.5" fill="none" shapeRendering="crispEdges" aria-hidden="true"><rect x=".5" y="1.500" width="14" height="11" fill="#fff" stroke="#888" /><path d="M2 3h6v8H2z" fill="#3c8578" /><path d="M9 10h2M12 3v3" stroke="#335" /></svg>
        <div className="ml-0.5 flex">
          {menus.map((m) => <button key={m} type="button" className="px-1.5 text-[13px] leading-[18px]">{m}</button>)}
        </div>
        <div className="ml-auto flex self-start">
          <button type="button" aria-label="Minimize document" className="flex h-[19px] w-[19px] items-center justify-center border border-[#777] bg-white"><svg width="8" height="8" aria-hidden="true"><path d="M1 5h6v2H1z" /></svg></button>
          <button type="button" aria-label="Restore document" className="flex h-[19px] w-[19px] items-center justify-center border border-[#777] bg-white"><svg width="9" height="9" fill="none" shapeRendering="crispEdges" aria-hidden="true"><path d="M2 3V1h6v4H6M.500 4.500h5v3h-5zM0 4h6" stroke="#000" /></svg></button>
          <button type="button" aria-label="Close document" className="flex h-[19px] w-[19px] items-center justify-center border border-[#777] bg-white"><svg width="8" height="8" aria-hidden="true"><path d="M1 1l6 6M7 1L1 7" stroke="#000" strokeWidth="2" /></svg></button>
        </div>
      </nav>

      <ToolRow groups={row1} label="Modeling tools" />
      <ToolRow groups={row2} label="Standard tools" />

      <main className="flex min-h-0 flex-1">
        <div className="flex w-[757px] shrink-0 flex-col border-r border-white">
          <section className="flex h-[389px] shrink-0 flex-col border-b border-white">
            <Caption title="Project Manager" />
            <div className="flex min-h-0 flex-1 pt-[6px] pb-2">
              <TabPanel tab="Project" tabWidth="w-[54px]">
                <Tree nodes={projectTree} h={22} rowClass="h-[22px]" className="-ml-px" label="Project tree" />
              </TabPanel>
            </div>
          </section>
          <section className="mt-[3px] flex min-h-0 flex-1 flex-col border-t-2 border-[#808080] pt-0.5">
            <Caption title="Properties" />
            <div className="flex min-h-0 flex-1 pt-[5px] pb-3">
              <TabPanel tab="Variables" tabWidth="w-[68px]">
                <table className="w-full table-fixed border-collapse text-[13px]">
                  <thead>
                    <tr>
                      {columns.map((c) => (
                        <th key={c.name} scope="col" className={`${c.w} h-5 overflow-hidden border-r-2 border-b-2 border-[#808080] bg-[#f0f0f0] p-0 text-center leading-4 font-normal whitespace-nowrap`}>{c.name}</th>
                      ))}
                    </tr>
                  </thead>
                </table>
              </TabPanel>
            </div>
          </section>
        </div>

        <section aria-label="Model history" className="mb-1 ml-[3px] flex w-[103px] shrink-0 flex-col border-2 border-[#e3e3e3] border-t-[#696969] border-l-[#696969] bg-white">
          <div className="min-h-0 flex-1 overflow-hidden">
            <Tree nodes={modelTree} h={20} rowClass="h-5" className="-ml-0.5 pt-px" label="Model tree" />
          </div>
          <div className="flex h-[17px] border-y border-r border-[#bbb]">
            <button type="button" aria-label="Scroll left" className="flex w-4 items-center justify-center pr-0.5"><svg width="5" height="9" fill="none" aria-hidden="true"><path d="M4 1L1 4.500 4 8" stroke="#222" strokeWidth="1" /></svg></button>
            <button type="button" aria-label="Scroll thumb" className="flex w-[42px] items-center justify-center border-x border-[#bbb] bg-[#dadada]"><svg width="8" height="7" shapeRendering="crispEdges" aria-hidden="true"><path d="M.500 0v7M3.500 0v7M6.500 0v7" stroke="#333" /></svg></button>
            <button type="button" aria-label="Scroll right" className="ml-auto flex w-4 items-center justify-center border-l border-[#ddd]"><svg width="5" height="9" fill="none" aria-hidden="true"><path d="M1 1l3 3.500L1 8" stroke="#222" strokeWidth="1" /></svg></button>
          </div>
        </section>

        <section aria-label="3D Modeler" className="mb-1 ml-1 min-w-0 flex-1 overflow-hidden border-t-2 border-r-2 border-l-2 border-[#696969] border-r-[#e3e3e3] bg-white">
          <Viewport />
        </section>
      </main>

      <div className="flex h-[127px] shrink-0 border-t-2 border-[#808080]">
        <section className="flex w-[1017px] shrink-0 gap-0.5 border-r-2 border-[#808080] pt-0.5 pr-[7px] pb-px pl-[3px]">
          <SideCaption title="Message Manager" />
          <div className="mb-0.5 flex-1 border border-[#828790] bg-white" />
        </section>
        <section className="flex min-w-0 flex-1 gap-0.5 pt-0.5 pr-1 pb-px pl-0.5">
          <SideCaption title="Progress" />
          <div className="mb-1 flex-1 border border-t-2 border-[#e3e3e3] border-t-[#696969] border-l-[#696969] bg-white" />
        </section>
      </div>

      <div className="flex h-[22px] shrink-0 items-center gap-[3px] border-t border-[#a0a0a0] pl-0.5">
        <span className="flex-1 pt-0.5 text-[13px] leading-4">F:/TSMC65_LP_Tong/Ant5.hfss</span>
        <span className="h-4 w-7 self-end border-t border-l border-[#a0a0a0] bg-[#f0f0f0]" />
        <span className="flex h-4 w-9 items-center justify-center self-end border-t border-l border-[#a0a0a0] text-[13px] leading-none">NUM</span>
        <span className="h-4 w-9 self-end border-t border-l border-[#a0a0a0]" />
      </div>

      <footer className="flex h-10 shrink-0 items-stretch border-t border-[#3f4d60] bg-[linear-gradient(90deg,#8095b0_0px,#8095b0_72px,#a7c0dd_78px,#a7c0dd_calc(100%-270px),#8294ac_calc(100%-230px))]">
        <button type="button" aria-label="Start" className="ml-2 flex w-[38px] items-center justify-center">
          <svg width="38" height="38" viewBox="0 0 38 38" aria-hidden="true">
            <defs><radialGradient id="orb" cy=".9"><stop offset="0" stopColor="#4fe0ff" /><stop offset=".6" stopColor="#1d5c92" /><stop offset="1" stopColor="#3d6f9e" /></radialGradient></defs>
            <circle cx="19" cy="19" r="18" fill="url(#orb)" stroke="#2a4d74" /><path d="M5 14a15 14 0 0 1 28 0q-14 6-28 0z" fill="#b9d4e8" opacity=".6" />
            <path d="M10 11q4-3 8-1l-1 8q-4-2-8 0z" fill="#f05a28" /><path d="M20 11q4 2 9 0l-1 8q-5 1-9-1z" fill="#8cc63f" /><path d="M9 20q4-2 8 0l-1 7q-4-2-8 0z" fill="#3fa9f5" /><path d="M19 21q4 2 8 0l-1 8q-4 1-8-1z" fill="#fcd116" />
          </svg>
        </button>
        <svg width="9" height="36" className="mx-3 self-center" aria-hidden="true"><path d="M1 2v32M4 2v32M7 2v32" stroke="#4c5c74" strokeWidth="1" strokeDasharray="1 2" /></svg>
        <div className="-ml-1 flex gap-[3px]">
          {apps.map((a) => (
            <button key={a.name} type="button" aria-label={a.name} className={`flex w-[59px] items-center justify-center rounded-xs ${a.frame === 'on' ? 'border border-[#6f87a6] bg-linear-to-br from-[#c4d5e8] to-[#a5bcd8] shadow-[inset_0_0_0_1px_#dbe6f2]' : a.frame === 'active' ? 'border border-[#5d7796] bg-linear-to-br from-[#dcebfa] to-[#bfe0fb] shadow-[inset_0_0_0_1px_#fff]' : ''}`}>
              <svg width="32" height="32" viewBox="0 0 32 32" fill="none" aria-hidden="true">{a.art}</svg>
            </button>
          ))}
        </div>
        <div className="ml-auto flex items-center text-white">
          <svg width="11" height="16" viewBox="0 0 11 16" fill="none" aria-hidden="true"><rect x="2" width="7" height="5" fill="#eee" stroke="#333" /><rect x=".5" y="5.500" width="10" height="10" rx="1" fill="#2aa020" stroke="#155010" /><path d="M5.500 14V7M3 9v2l5 1V9" stroke="#fff" /></svg>
          <svg width="8" height="5" className="ml-[18px]" aria-hidden="true"><path d="M0 5h8L4 0z" fill="#fff" /></svg>
          <svg width="17" height="15" viewBox="0 0 17 15" className="ml-3" fill="none" aria-hidden="true"><path d="M6 0c9 0 8 11 0 10l-4 2v-3C-2 6 0 0 6 0z" fill="#69d040" /><path d="M11 5c7 0 7 7 3 8v2l-3-1C4 14 4 5 11 5z" fill="#fff" /></svg>
          <svg width="16" height="13" className="ml-2" shapeRendering="crispEdges" aria-hidden="true"><Rects c="#fff" r={[[0, 10, 2, 3], [3, 8, 2, 5], [6, 6, 2, 7], [9, 3, 2, 10], [12, 0, 3, 13]]} /></svg>
          <svg width="15" height="15" className="ml-2.5" fill="none" aria-hidden="true"><path d="M1 5h2l5-4v13l-5-4H1z" fill="#fff" /><path d="M10 5q2 3 0 5M12 4q3 4 0 7" stroke="#fff" /></svg>
          <div className="ml-1 w-[78px] text-center text-sm leading-[18px]"><div>11:31</div><div>2017/12/18</div></div>
          <button type="button" aria-label="Show desktop" className="h-full w-3.5 border-l border-[#40506a] bg-linear-to-b from-[#7d8ea6] via-[#4c5c74] to-[#7f90a8] shadow-[inset_1px_0_0_#b0bed0]" />
        </div>
      </footer>

      <div className="absolute right-1 bottom-[228px] flex h-[57px] w-[203px] gap-[3px] rounded-lg border-[5px] border-[#2c2c2c] bg-black px-1 shadow-[0_1px_3px_#0008]">
        {imeKeys.map((k) => (
          <button key={k.name} type="button" aria-label={k.name} className={`${k.key} flex h-[43px] flex-1 items-center justify-center rounded-md border-x border-b-2 bg-linear-to-b from-[#484848] to-[#2a2a2a]`}>
            <svg width="24" height="24" viewBox="0 0 24 24" fill="none" aria-hidden="true">{k.art}</svg>
          </button>
        ))}
      </div>

      <div className="absolute top-[294px] -right-[34px] h-[46px] w-[46px] rounded-full bg-[#c9fbf9]" />
      <button type="button" className="absolute top-[647px] -right-[27px] flex h-[46px] w-[46px] items-center rounded-full border-2 border-[#e8e8e8] bg-linear-to-b from-[#7be08a] to-[#35bf4c] pl-[3px] text-[13px] font-bold text-white shadow-[inset_0_0_0_1px_#187848,0_1px_4px_#0008]">13</button>

      <div className="absolute right-[227px] bottom-10 flex h-[26px] w-[79px] items-center border-t border-black bg-linear-to-b from-[#a0a0a0] to-[#1c1c1c] to-45% pl-1">
        <svg width="9" height="18" aria-hidden="true"><path d="M1 1v17M4 1v17M7 1v17" stroke="#111" strokeDasharray="1 3" /></svg>
        <svg width="16" height="16" viewBox="0 0 16 16" className="ml-1.5" fill="none" aria-hidden="true"><path d="M1 2l13-2 2 13-13 3z" fill="#f4501e" /><path d="M12 4q-8-1-8 2t7 2-8 4" stroke="#fff" strokeWidth="2" /></svg>
        <span className="ml-[7px] flex h-[15px] w-[15px] items-center justify-center rounded-full border border-[#b8c0d8] bg-[#0a1cb8] text-[11px] leading-none font-bold text-white">?</span>
        <svg width="6" height="12" className="ml-3" aria-hidden="true"><path d="M0 0h5v2H0zM0 8h6L3 11z" fill="#fff" /></svg>
      </div>
    </div>
  );
}
